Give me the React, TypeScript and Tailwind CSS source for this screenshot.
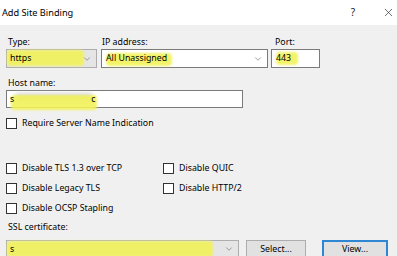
import { ChevronDown, X } from "lucide-react";

const FONT = { fontFamily: '"Noto Sans", "Open Sans", sans-serif' };

function Check({ label }: { label: string }) {
  return (
    <label className="flex items-center gap-[5px] h-[20px]">
      <span className="w-[11px] h-[11px] border border-[#333] bg-white shrink-0" />
      <span className="text-[8.8px] leading-[13px] text-black">{label}</span>
    </label>
  );
}

function Marker({ className }: { className: string }) {
  return <span className={"absolute bg-[#f2f25a] opacity-90 rounded-[4px] blur-[1px] " + className} />;
}

export default function App() {
  return (
    <div className="w-[397px] h-[256px] overflow-hidden bg-[#f0f0f0] flex flex-col" style={FONT}>
      <div className="h-[2px] bg-[#c7cfda]" />
      <div className="h-[25px] bg-white flex items-center justify-between pl-[2px] pr-[2px] shrink-0">
        <span className="text-[9.2px] text-black">Add Site Binding</span>
        <div className="flex items-center gap-[27px]">
          <span className="text-[10px] text-[#222]">?</span>
          <X size={13} strokeWidth={1.2} className="text-[#222]" />
        </div>
      </div>

      <div className="flex-1 flex flex-col px-[6px] pt-[11px]">
        <div className="flex text-[8.8px] leading-[13px] text-black">
          <div className="w-[91px] flex flex-col">
            <span className="pl-[2px]">Type:</span>
            <div className="relative h-[19px] border border-[#adadad] bg-[#e5e5e5] flex items-center justify-between pl-[3px] pr-[4px]">
              <Marker className="left-0 right-[12px] top-0 bottom-[1px]" />
              <span className="relative">https</span>
              <ChevronDown size={10} strokeWidth={1.3} className="relative text-[#555]" />
            </div>
          </div>
          <div className="w-[167px] ml-[4px] flex flex-col">
            <span className="pl-[1px]">IP address:</span>
            <div className="relative h-[19px] border border-[#7a7a7a] bg-white flex items-center justify-between pl-[4px] pr-[4px]">
              <Marker className="left-[4px] w-[66px] top-[3px] bottom-[1px]" />
              <span className="relative">All Unassigned</span>
              <ChevronDown size={10} strokeWidth={1.3} className="relative text-[#555]" />
            </div>
          </div>
          <div className="w-[49px] ml-[3px] flex flex-col">
            <span className="pl-[4px]">Port:</span>
            <div className="relative h-[19px] border border-[#7a7a7a] bg-white flex items-center pl-[4px]">
              <Marker className="left-[4px] w-[22px] top-[2px] bottom-[2px]" />
              <span className="relative">443</span>
            </div>
          </div>
        </div>

        <div className="flex flex-col mt-[9px] text-[8.8px] leading-[13px] text-black">
          <span className="pl-[2px]">Host name:</span>
          <div className="relative w-[237px] h-[18px] border border-[#7a7a7a] bg-white flex items-center pl-[3px]">
            <span className="absolute left-[9px] w-[76px] top-[2px] h-[8px] bg-[#d8d8d8] blur-[2px]" />
            <Marker className="left-[4px] w-[86px] top-[4px] -bottom-[3px]" />
            <span className="relative">s</span>
            <span className="relative ml-[77px]">c</span>
          </div>
        </div>

        <div className="mt-[5px]">
          <Check label="Require Server Name Indication" />
        </div>

        <div className="grid grid-cols-[157px_1fr] mt-[25px]">
          <Check label="Disable TLS 1.3 over TCP" />
          <Check label="Disable QUIC" />
          <Check label="Disable Legacy TLS" />
          <Check label="Disable HTTP/2" />
          <Check label="Disable OCSP Stapling" />
        </div>

        <div className="flex flex-col mt-[3px] text-[8.8px] leading-[13px] text-black">
          <span className="pl-[2px]">SSL certificate:</span>
          <div className="flex items-center mt-[6px]">
            <div className="relative w-[233px] h-[18px] border border-[#adadad] bg-[#e5e5e5] flex items-center justify-between pl-[3px] pr-[4px]">
              <Marker className="left-0 w-[206px] top-0 bottom-0 rounded-[2px]" />
              <span className="relative">s</span>
              <ChevronDown size={10} strokeWidth={1.3} className="relative text-[#555]" />
            </div>
            <button className="ml-[7px] w-[60px] h-[18px] border border-[#adadad] bg-[#e1e1e1] text-[8.8px]">
              Select...
            </button>
            <button className="ml-[16px] w-[66px] h-[18px] border-2 border-[#2f86d2] bg-[#e1e1e1] text-[8.8px]">
              View...
            </button>
          </div>
        </div>
      </div>
    </div>
  );
}
